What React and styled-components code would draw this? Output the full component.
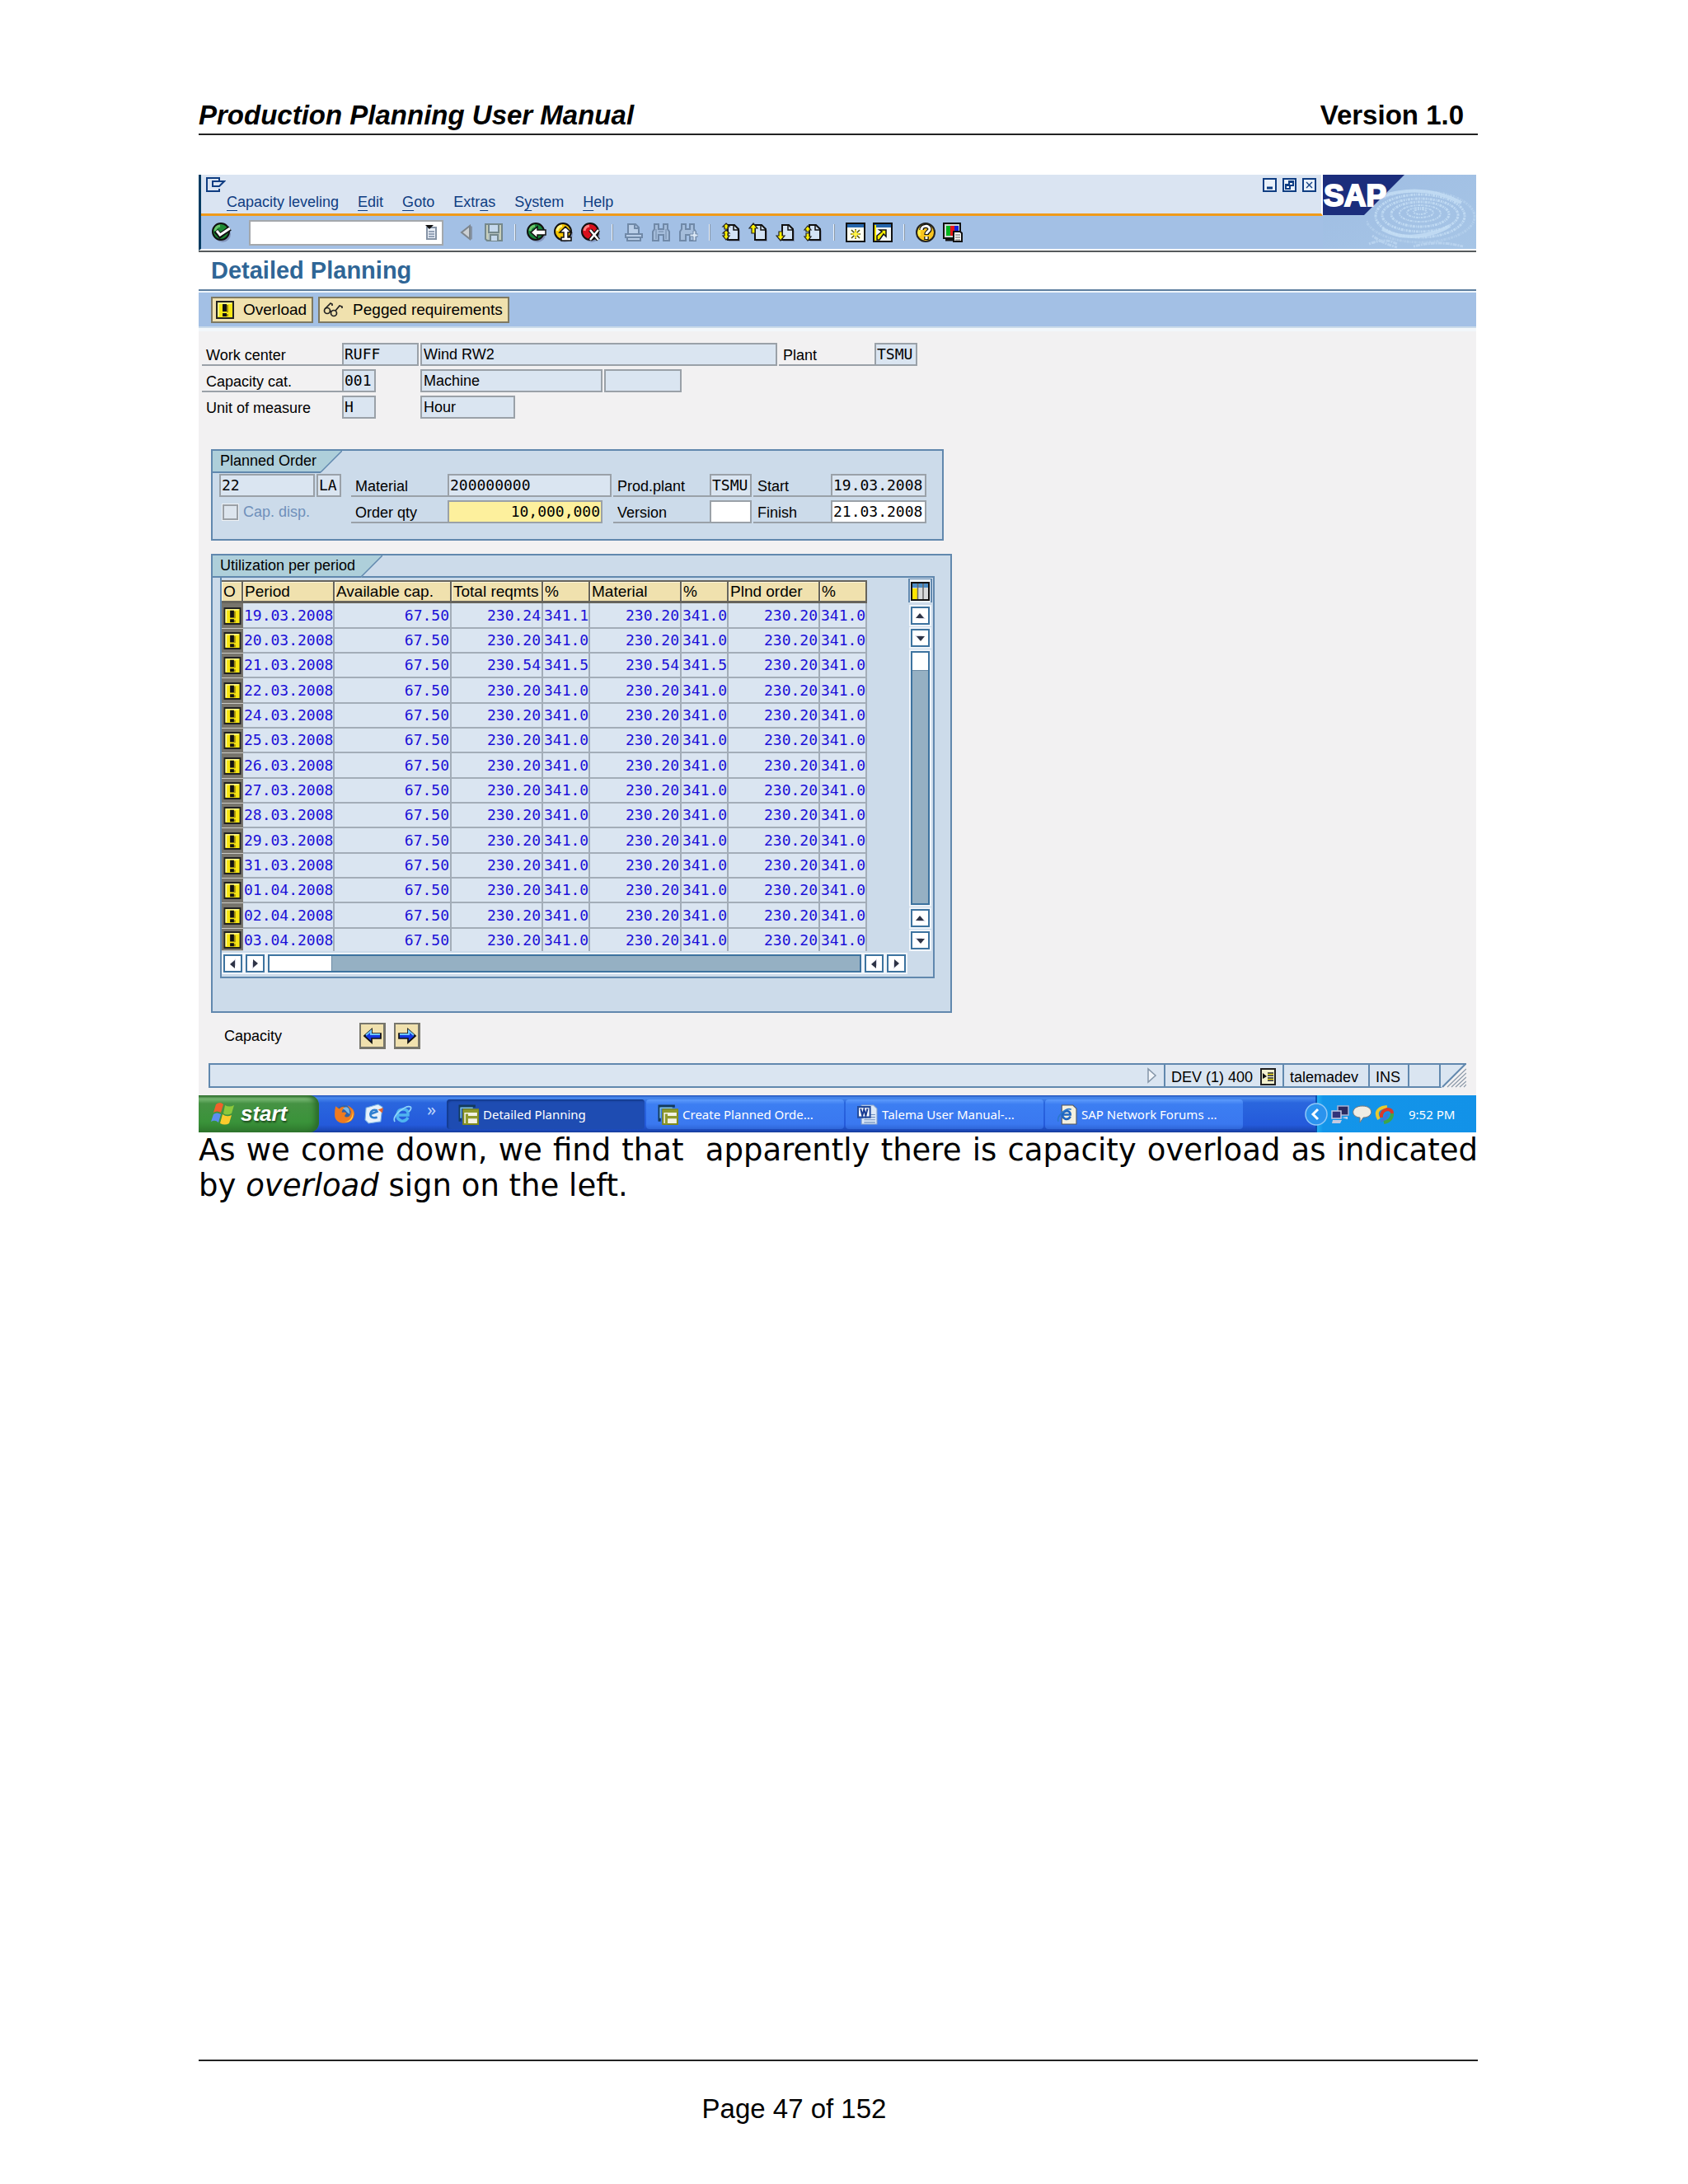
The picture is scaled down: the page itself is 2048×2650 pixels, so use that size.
import React from 'react';
import styled, { createGlobalStyle, css } from 'styled-components';

const colors = {
  pale: '#dae4f2',
  bar: '#a3c0e5',
  body: '#f2f1f2',
  panel: '#ccdbea',
  field: '#dae5f1',
  tab: '#aecfda',
  line: '#6188ae',
  fieldLine: '#9aa1a8',
  sand: '#f0e1ae',
  navy: '#0f3d82',
  yellow: '#fff200',
};

const sans = "'Liberation Sans', Arial, sans-serif";
const mono = "'DejaVu Sans Mono', 'Liberation Mono', monospace";

const GlobalStyle = createGlobalStyle`
  * {
    box-sizing: border-box;
  }
  body {
    margin: 0;
    background: #fff;
    color: #000;
    font-family: ${sans};
  }
  button, input {
    margin: 0;
    padding: 0;
    font: inherit;
    color: inherit;
    border-radius: 0;
  }
  svg {
    display: block;
    flex: none;
  }
`;

/* ---------- document page ---------- */

const Page = styled.div`
  display: flex;
  flex-direction: column;
  min-height: 100vh;
  padding: 121px 255px 72px 241px;
`;

const PageHeader = styled.header`
  display: flex;
  justify-content: space-between;
  padding: 0 17px 3px 0;
  border-bottom: 2px solid #222;
  margin-bottom: 48px;
  font-size: 33px;
  line-height: 38px;
  font-weight: bold;
`;

const Paragraph = styled.p`
  margin: 0;
  font-family: 'DejaVu Sans', Verdana, sans-serif;
  font-size: 37px;
  line-height: 43px;
  text-align: justify;
`;

const PageFooter = styled.footer`
  margin-top: auto;
  padding: 39px 107px 0 0;
  border-top: 2px solid #222;
  font-size: 33px;
  line-height: 38px;
  text-align: center;
`;

/* ---------- SAP window ---------- */

const Screen = styled.main`
  margin-right: 2px;
  background: ${colors.body};
  font-size: 18px;
  line-height: 20px;
`;

const TopArea = styled.div`
  display: flex;
  border-left: 3px solid #063c62;
  border-bottom: 2px solid #fff;
`;

const TopBars = styled.div`
  flex: 1;
`;

const MenuBar = styled.div`
  display: flex;
  flex-direction: column;
  height: 50px;
  padding: 1px 6px 0 6px;
  background: ${colors.pale};
  border-bottom: 3px solid #f09a1a;
  border-right: 2px solid #fff;
`;

const TitleStrip = styled.div`
  display: flex;
  align-items: center;
  height: 22px;
`;

const WindowButtons = styled.div`
  display: flex;
  gap: 7px;
  margin-left: auto;
`;

const WindowButton = styled.button`
  width: 17px;
  height: 17px;
  border: 2px solid ${colors.navy};
  background: #eaf1fa;
`;

const Menu = styled.nav`
  display: flex;
  gap: 23px;
  padding-left: 25px;
  color: ${colors.navy};
`;

const MenuItem = styled.a`
  color: inherit;
  text-decoration: none;
  u {
    text-underline-offset: 4px;
    text-decoration-thickness: 1px;
  }
`;

const Toolbar = styled.div`
  display: flex;
  align-items: center;
  gap: 9px;
  height: 40px;
  padding-left: 13px;
  background: ${colors.bar};
`;

const ToolButton = styled.button`
  width: 24px;
  height: 24px;
  border: 0;
  background: none;
`;

const ToolSeparator = styled.span`
  width: 2px;
  height: 20px;
  margin: 0 4px;
  background: #e9f1fa;
  border-right: 1px solid #8a98a8;
`;

const CommandBox = styled.label`
  display: flex;
  align-items: center;
  width: 236px;
  height: 31px;
  margin: 0 7px 0 12px;
  padding-right: 5px;
  background: #fff;
  border: 2px solid #a4a8ac;
`;

const CommandInput = styled.input`
  flex: 1;
  min-width: 0;
  border: 0;
  background: none;
  outline: 0;
`;

const TitleBar = styled.h1`
  margin: 0;
  padding: 6px 15px 0;
  height: 49px;
  border-top: 2px solid #555a5c;
  border-bottom: 2px solid #5f7f9f;
  background: #fff;
  color: #2f6696;
  font-size: 29px;
  line-height: 32px;
`;

const ActionBar = styled.div`
  display: flex;
  align-items: center;
  gap: 6px;
  height: 49px;
  padding: 0 15px 2px;
  background: ${colors.bar};
  border-top: 2px solid #eef5fb;
  border-bottom: 4px solid #f2f7fb;
  box-shadow: inset 0 -2px #c9dae9;
`;

const ActionButton = styled.button`
  display: flex;
  align-items: center;
  gap: 11px;
  height: 32px;
  padding: 0 6px 0 4px;
  border: 2px solid #7e7962;
  background: ${colors.sand};
  font-size: 19px;
`;

const Content = styled.div`
  padding: 14px 12px 9px 4px;
`;

/* ---------- form parts ---------- */

const Row = styled.div`
  display: flex;
  height: 28px;
  margin-bottom: 4px;
`;

const Label = styled.label`
  flex: none;
  width: ${({ $w }) => $w}px;
  padding: 5px 0 0 5px;
  border-bottom: 2px solid ${({ $plain }) => ($plain ? 'transparent' : colors.fieldLine)};
  white-space: nowrap;
`;

const tones = {
  locked: colors.field,
  open: '#fff',
  required: '#fdf09d',
};

const Field = styled.input`
  flex: none;
  width: ${({ $w }) => $w}px;
  height: 28px;
  padding: 0 2px;
  border: 2px solid ${colors.fieldLine};
  background: ${({ $tone }) => tones[$tone || 'locked']};
  margin-right: ${({ $after }) => $after || 0}px;
  outline: 0;
  ${({ $mono }) => $mono && css`
    padding: 0 1px 2px;
    font-family: ${mono};
  `}
  ${({ $right }) => $right && css`
    text-align: right;
  `}
`;

const Panel = styled.section`
  width: ${({ $w }) => $w}px;
  margin: ${({ $top }) => $top}px 0 0 11px;
  padding-bottom: ${({ $bottom }) => $bottom}px;
  border: 2px solid ${colors.line};
  background: ${colors.panel};
`;

const PanelHead = styled.div`
  display: flex;
  height: 27px;
`;

const PanelTitle = styled.h2`
  margin: 0;
  padding: 2px 14px 0 9px;
  width: ${({ $w }) => $w}px;
  background: ${colors.tab};
  border-bottom: 2px solid ${colors.line};
  font-size: 18px;
  font-weight: normal;
  line-height: 20px;
  white-space: nowrap;
`;

const OrderGrid = styled.div`
  display: grid;
  grid-template-columns: 160px 117px 201px 117px 53px 94px 116px;
  row-gap: 4px;
  padding: 1px 0 0 8px;
`;

const Cell = styled.div`
  display: flex;
`;

const CheckLabel = styled.label`
  display: flex;
  align-items: center;
  gap: 6px;
  padding-left: 4px;
  color: #6f90ba;
`;

const CheckBox = styled.input`
  appearance: none;
  width: 19px;
  height: 19px;
  border: 2px solid #9ba0a6;
  background: #dde5ee;
  box-shadow: 0 0 0 1px #eef2f6;
`;

/* ---------- utilization table ---------- */

const TableFrame = styled.div`
  width: 867px;
  margin: -2px 0 0 9px;
  padding: 1px 0 5px;
  border: 2px solid ${colors.line};
`;

const TableArea = styled.div`
  display: flex;
  justify-content: space-between;
`;

const Table = styled.table`
  width: 783px;
  margin-top: 2px;
  table-layout: fixed;
  border-collapse: separate;
  border-spacing: 0;
`;

const HeadCell = styled.th`
  height: 28px;
  padding: 0 0 0 2px;
  background: ${colors.sand};
  border: solid #66645c;
  border-width: 2px 2px 3px 0;
  box-shadow: inset 1px 1px #fbf5dc;
  font-size: 19px;
  font-weight: normal;
  text-align: left;
  white-space: nowrap;
`;

const BodyRow = styled.tr`
  height: 30px;
  &:nth-child(3n + 1) {
    height: 31px;
  }
  &:last-child {
    height: 27px;
  }
`;

const DataCell = styled.td`
  padding: 0 1px;
  background: ${colors.field};
  border-right: 2px solid #a3adb8;
  border-bottom: 2px solid #a3adb8;
  color: #1a0fd8;
  font-family: ${mono};
  line-height: 24px;
  text-align: ${({ $left }) => ($left ? 'left' : 'right')};
  ${BodyRow}:last-child & {
    border-bottom: 0;
  }
`;

const FlagCell = styled.td`
  padding: 0 1px 0 2px;
  background: #77746c;
  border-bottom: 1px solid #c9c9c4;
`;

const VerticalScroll = styled.div`
  display: flex;
  flex-direction: column;
  align-items: center;
  gap: 5px;
  padding: 0 1px 2px 0;
`;

const HorizontalScroll = styled.div`
  display: flex;
  gap: 4px;
  margin-top: 4px;
  padding: 0 33px 0 2px;
`;

const ScrollButton = styled.button`
  display: flex;
  align-items: center;
  justify-content: center;
  width: 23px;
  height: 22px;
  border: 2px solid #3d739f;
  background: #fff;
  box-shadow: 0 0 0 2px #f0f5fa;
`;

const Track = styled.div`
  flex: 1;
  display: flex;
  flex-direction: ${({ $vertical }) => ($vertical ? 'column' : 'row')};
  ${({ $vertical }) => ($vertical ? 'width: 23px;' : 'height: 22px;')}
  border: 2px solid #3d739f;
  background: #95b0c3;
  box-shadow: 0 0 0 2px #f0f5fa;
`;

const Thumb = styled.div`
  ${({ $vertical }) => ($vertical ? 'height: 22px;' : 'width: 76px;')}
  background: #fff;
  border: solid #6d8ca5;
  border-width: ${({ $vertical }) => ($vertical ? '0 0 1px' : '0 1px 0 0')};
`;

const ConfigButton = styled.button`
  display: flex;
  align-items: center;
  justify-content: center;
  width: 29px;
  height: 29px;
  border: solid ${colors.line};
  border-width: 1px 2px 0;
  background: #eef4fa;
`;

const CapacityRow = styled.div`
  display: flex;
  align-items: center;
  gap: 10px;
  margin: 12px 0 17px 27px;
`;

const CapacityLabel = styled.span`
  width: 154px;
`;

const StepButton = styled.button`
  display: flex;
  align-items: center;
  justify-content: center;
  width: 32px;
  height: 32px;
  border: solid #77766c;
  border-width: 2px 3px 3px 2px;
  background: ${colors.sand};
`;

const StatusBar = styled.div`
  display: flex;
  height: 30px;
  margin-left: 8px;
  border: 2px solid ${colors.line};
  border-right: 0;
  background: ${colors.field};
`;

const StatusCell = styled.div`
  display: flex;
  align-items: center;
  gap: 9px;
  width: ${({ $w }) => $w}px;
  padding: 3px 0 0 7px;
  border-left: 2px solid ${colors.line};
`;

const StatusMessage = styled.div`
  flex: 1;
  display: flex;
  align-items: center;
  justify-content: flex-end;
  padding-right: 8px;
`;

const GripBox = styled.div`
  margin: -2px 0;
  border-left: 2px solid ${colors.line};
`;

/* ---------- Windows taskbar ---------- */

const Taskbar = styled.div`
  display: flex;
  height: 45px;
  background: linear-gradient(#1f4fb8 0, #4b8bee 3px, #2a66de 9px, #245adb 36px, #1b47b4 43px, #153a94);
  color: #fff;
  font-family: 'Noto Sans', Tahoma, sans-serif;
  font-size: 15px;
`;

const StartButton = styled.button`
  display: flex;
  align-items: center;
  gap: 7px;
  width: 146px;
  padding: 0 0 2px 15px;
  border: 0;
  border-radius: 0 12px 12px 0;
  background: linear-gradient(#2d6f2c 0, #7cbb78 4px, #459243 10px, #3a933a 32px, #2f7a2e);
  box-shadow: inset -5px 0 6px #2c6c2b;
  font-family: ${sans};
  font-size: 26px;
  font-weight: bold;
  font-style: italic;
  text-shadow: 1px 2px 2px #1d4a1d;
`;

const QuickLaunch = styled.div`
  display: flex;
  align-items: center;
  gap: 10px;
  width: 155px;
  padding-left: 18px;
`;

const Chevrons = styled.span`
  margin-left: 8px;
  padding-bottom: 14px;
  color: #bcd3fa;
  font-size: 22px;
`;

const TaskButton = styled.button`
  display: flex;
  align-items: center;
  gap: 5px;
  width: 240px;
  height: 36px;
  margin: 5px 2px 0 0;
  padding-left: 14px;
  border: 0;
  border-radius: 4px;
  background: ${({ $active }) => ($active ? '#1e4cb2' : 'linear-gradient(#5d9bfb, #3c7ef2 6px, #3a78f0 30px, #2f66d8)')};
  box-shadow: ${({ $active }) => ($active ? 'inset 2px 2px 2px #143a8e' : 'none')};
  white-space: nowrap;
`;

const Tray = styled.div`
  display: flex;
  align-items: center;
  gap: 3px;
  width: 208px;
  margin-left: auto;
  background: linear-gradient(90deg, transparent 13px, #0b4fae 13px, #0b4fae 15px, #22b0f2 15px, #1395ea 22px, #1292e8);
`;

const Clock = styled.time`
  margin-left: 14px;
`;

/* ---------- icons ---------- */

const Icon = ({ w = 24, h = 24, box = '0 0 24 24', children }) => (
  <svg width={w} height={h} viewBox={box} aria-hidden="true">
    {children}
  </svg>
);

const Ball = ({ fill, shine, children }) => (
  <Icon>
    <circle cx="13" cy="14" r="10" fill="#8396bd" />
    <circle cx="11" cy="11" r="10" fill={fill} stroke="#111" strokeWidth="2" />
    <path d="M4 10a7 7 0 0 1 6-6" fill="none" stroke={shine} strokeWidth="3" />
    {children}
  </Icon>
);

const icons = {
  check: (
    <Ball fill="#1f8a34" shine="#6cc66c">
      <path d="M5 10l5 6 12-9" fill="none" stroke="#111" strokeWidth="6" />
      <path d="M6 10l4 5 12-8" fill="none" stroke="#fff" strokeWidth="3" />
    </Ball>
  ),
  prev: (
    <Icon>
      <path d="M17 4v17l2-1V5z" fill="#8795a8" />
      <path d="M16 4v16L6 12z" fill="#ccd0d4" stroke="#7d858d" strokeWidth="2" />
    </Icon>
  ),
  save: (
    <Icon>
      <path d="M2 2h20v20H4l-2-2z" fill="#b5c3c0" stroke="#75888c" strokeWidth="2" />
      <path d="M6 2h12v10H6zM8 22v-7h9v7" fill="#c5d8ec" stroke="#75888c" strokeWidth="2" />
      <path d="M4 3v17M20 3v18" stroke="#d9d9b5" strokeWidth="1" />
    </Icon>
  ),
  back: (
    <Ball fill="#17863a" shine="#6cc66c">
      <path d="M5 12l8-7v4h10v6H13v4z" fill="#fff" stroke="#111" strokeWidth="1.5" />
    </Ball>
  ),
  up: (
    <Ball fill="#f7c600" shine="#fff58a">
      <path d="M14 5l7 7h-4v6h4v4H9v-4h3v-6H7z" fill="#fff" stroke="#111" strokeWidth="1.5" />
    </Ball>
  ),
  cancel: (
    <Ball fill="#d8101c" shine="#ff8080">
      <path d="M11 9l10 12M21 9L11 21" stroke="#111" strokeWidth="5" />
      <path d="M11 9l10 12M21 9L11 21" stroke="#fff" strokeWidth="2.5" />
    </Ball>
  ),
  print: (
    <Icon>
      <path d="M5 14V2h9l4 4v8" fill="#b9cee8" stroke="#7089a8" strokeWidth="2" />
      <path d="M13 2v5h5" fill="none" stroke="#7089a8" strokeWidth="2" />
      <path d="M2 14h20v4H2zM4 18h16v4H4z" fill="#b9cee8" stroke="#7089a8" strokeWidth="2" />
    </Icon>
  ),
  find: (
    <Icon>
      <path d="M4 2h5v6h6V2h5v6l2 3v11h-7v-7H9v7H2V11l2-3z" fill="#a5bddb" stroke="#7089a8" strokeWidth="2" />
      <path d="M9 11h6M6 8v12M18 8v12" stroke="#7089a8" strokeWidth="1" />
    </Icon>
  ),
  findNext: (
    <Icon>
      <path d="M4 2h5v6h5V2h5v6l2 3v11h-7v-7H9v7H2V11l2-3z" fill="#a5bddb" stroke="#7089a8" strokeWidth="2" />
      <path d="M14 14h4v-4h3v4h3v3h-3v5h-3v-5h-4z" fill="#dbe8f6" stroke="#7089a8" strokeWidth="1" />
    </Icon>
  ),
  newSession: (
    <Icon>
      <path d="M1 1h22v22H1z" fill="#fffff0" stroke="#111" strokeWidth="2" />
      <path d="M2 2h20v4H2z" fill="#2666ad" />
      <path d="M12 8v12M6 14h12M7 9l10 10M17 9L7 19" stroke="#4a4a10" strokeWidth="1.5" />
      <path d="M12 9v10M7 14h10" stroke="#ffe600" strokeWidth="1.5" />
      <circle cx="12" cy="14" r="2.5" fill="#fff34a" />
    </Icon>
  ),
  shortcut: (
    <Icon>
      <path d="M1 1h22v22H1z" fill="#f4f6f4" stroke="#111" strokeWidth="2" />
      <path d="M2 2h20v4H2z" fill="#2666ad" />
      <path d="M3 3v19" stroke="#ffe600" strokeWidth="2" />
      <path d="M5 21v-5l6-5-3-2h8v8l-3-3-5 7z" fill={colors.yellow} stroke="#111" strokeWidth="1.5" />
    </Icon>
  ),
  help: (
    <Icon>
      <circle cx="12" cy="12" r="11" fill="#f9c51f" stroke="#222" strokeWidth="2" />
      <path d="M5 16A9 9 0 0 1 9 4" fill="none" stroke="#fff24a" strokeWidth="3" />
      <path d="M7 9c0-6 10-6 10-1 0 3-4 3-4 7M13 17v4" fill="none" stroke="#111" strokeWidth="5.5" />
      <path d="M7 9c0-6 10-6 10-1 0 3-4 3-4 6M13 17v3" fill="none" stroke="#fff" strokeWidth="3" />
    </Icon>
  ),
  layout: (
    <Icon>
      <path d="M1 1h20v18H1z" fill="#cfd6d6" stroke="#111" strokeWidth="2" />
      <path d="M4 4h5v12H4z" fill="#00b41e" />
      <path d="M9 4h5v12H9z" fill="#e8121a" />
      <path d="M14 4h5v12h-5z" fill="#1420dc" />
      <path d="M3 21h12" stroke="#111" strokeWidth="3" />
      <path d="M13 11h8l2 2v10H13z" fill="#fff" stroke="#111" strokeWidth="2" />
      <path d="M15 15h6M15 18h6M15 21h6" stroke="#555" strokeWidth="1" />
    </Icon>
  ),
};

const pageArrows = {
  first: ['M6 1l4 4H8v3H4V5H2z', 'M6 9l4 4H8v3h2l-4 5-4-5h2v-3H2z'],
  previous: ['M6 1l5 6H8v6H4V7H1z'],
  next: ['M4 11h4v5h3l-5 6-5-6h3z'],
  last: ['M6 4l4 5H8v2H4V9H2z', 'M4 13h4v4h2l-4 5-4-5h2z'],
};

const PageIcon = ({ kind }) => (
  <Icon>
    <path d="M9 5h10l4 5v13H9z" fill="#8497bb" />
    <path d="M8 3h8l5 5v13H8z" fill="#d3e3f5" stroke="#111" strokeWidth="2" />
    <path d="M15 3v6h6" fill="none" stroke="#111" strokeWidth="1.5" />
    {pageArrows[kind].map((d) => (
      <path key={d} d={d} fill={colors.yellow} stroke="#222" strokeWidth="1.2" />
    ))}
  </Icon>
);

const ExitIcon = () => (
  <Icon w={24} h={18} box="0 0 24 18">
    <path d="M16 5V1H1v16h15v-3M8 5h14l-6 6H8z" fill="none" stroke={colors.navy} strokeWidth="2" />
  </Icon>
);

const HistoryIcon = () => (
  <Icon w={16} h={20} box="0 0 16 20">
    <path d="M3 4h11v14H3z" fill="#eaf0f8" stroke="#8593a5" strokeWidth="2" />
    <path d="M1 1h10L6 6z" fill="#111" />
    <path d="M5 9h7M5 12h7M5 15h7" stroke="#7888a0" strokeWidth="1.5" />
  </Icon>
);

const Overload = ({ h = 22 }) => (
  <Icon w={22} h={h} box="0 0 22 22">
    <path d="M1 1h20v20H1z" fill="#f7e614" stroke="#222" strokeWidth="2" />
    <path d="M3 19V3h16" fill="none" stroke="#fffbb0" strokeWidth="1.5" />
    <path d="M14 5v9M14 16v3" stroke="#a08c10" strokeWidth="2" />
    <path d="M8 4h5v9H8zM8 15h5v4H8z" fill="#111" />
  </Icon>
);

const Glasses = () => (
  <Icon w={25} h={22} box="0 0 25 22">
    <g fill="none" stroke="#222" strokeWidth="1.7">
      <circle cx="5" cy="12" r="3.5" />
      <circle cx="13" cy="15" r="3.5" />
      <path d="M2 10L9 3l2 1v2M8 12l2 1M15 12l5-6 3 1v2" />
    </g>
  </Icon>
);

const WindowGlyph = ({ kind }) => (
  <Icon w={13} h={13} box="0 0 13 13">
    {kind === 'minimize' && <path d="M3 10h7" stroke={colors.navy} strokeWidth="3" />}
    {kind === 'restore' && (
      <g fill={colors.navy}>
        <path d="M5 1h7v7H5z" />
        <path d="M1 5h7v7H1z" />
        <path d="M7 4h3v2H7zM3 8h3v2H3z" fill="#fff" />
      </g>
    )}
    {kind === 'close' && <path d="M3 3l7 7M10 3l-7 7" stroke={colors.navy} strokeWidth="1.3" />}
  </Icon>
);

const ripples = [
  [8, 3], [16, 6], [25, 10], [35, 15], [46, 20], [54, 26], [66, 31],
];

const SapLogo = () => (
  <svg width="186" height="90" viewBox="0 0 186 90" role="img" aria-label="SAP">
    <defs>
      <linearGradient id="water" x1="0" x2="1" y1="0" y2="1">
        <stop offset="0" stopColor="#9fbde3" />
        <stop offset="1" stopColor="#a6c5e6" />
      </linearGradient>
      <clipPath id="waterClip">
        <path d="M99 0h87v90H48l6-40z" />
      </clipPath>
    </defs>
    <rect width="186" height="90" fill="url(#water)" />
    <g clipPath="url(#waterClip)" fill="none" stroke="#c6def5">
      {ripples.map(([rx, ry], i) => (
        <ellipse
          key={rx}
          cx="118"
          cy={45 + i}
          rx={rx}
          ry={ry}
          strokeWidth={i > 2 ? 3 : 2}
          strokeDasharray="1 1 3 1 2 1"
          opacity={i > 5 ? 0.4 : 0.8}
        />
      ))}
      <path d="M72 66q28 16 66 3M92 74q36 4 62-12M72 26q50-16 96 8" strokeWidth="4" opacity="0.8" />
      <path d="M56 84q20-8 34 0M60 74q14 10 30 14M110 87q30-8 60 0" strokeWidth="3" opacity="0.6" strokeDasharray="2 1 5 1" />
    </g>
    <path d="M0 0h99L50 49H0z" fill="#1b2d7c" />
    <text
      x="1"
      y="38"
      fill="#fff"
      stroke="#fff"
      strokeWidth="2"
      fontFamily="'Liberation Sans', Arial, sans-serif"
      fontWeight="bold"
      fontSize="37"
    >
      SAP
    </text>
  </svg>
);

const Slope = () => (
  <svg width="26" height="27" viewBox="0 0 26 27" aria-hidden="true">
    <path d="M0 0h26L0 27z" fill={colors.tab} />
    <path d="M26 0L0 26" stroke={colors.line} strokeWidth="1.5" />
  </svg>
);

const turns = { up: 0, right: 90, down: 180, left: 270 };

const Arrow = ({ to }) => (
  <Icon w={15} h={15} box="0 0 15 15">
    <g transform={`rotate(${turns[to]} 7.5 7.5)`}>
      <path d="M8 5l6 6H5z" fill="#d4d6e4" />
      <path d="M7 4l5 6H2z" fill="#2e3345" />
    </g>
  </Icon>
);

const BlueArrow = ({ flip }) => (
  <Icon w={24} h={20} box="0 0 24 20">
    <g transform={flip ? 'translate(24 0) scale(-1 1)' : undefined}>
      <path d="M2 10l9-8v5h11v6H11v5z" fill="#1438e0" stroke="#111" strokeWidth="1.7" />
      <path d="M4 9l6-5v4h11" fill="none" stroke="#6fc8ff" strokeWidth="2" />
    </g>
  </Icon>
);

const ConfigIcon = () => (
  <Icon w={23} h={23} box="0 0 23 23">
    <path d="M1 1h21v21H1z" fill="#d8dada" stroke="#111" strokeWidth="2" />
    <path d="M2 2h19v5H2z" fill="#4c8cc4" />
    <path d="M2 8h6v13H2z" fill="#ffe500" />
    <path d="M8.5 2v19M15 2v19" stroke="#666" strokeWidth="1.5" />
  </Icon>
);

const StatusIcon = () => (
  <Icon w={19} h={21} box="0 0 19 21">
    <path d="M1 1h17v19H1z" fill="#f3f1cf" stroke="#222" strokeWidth="2" />
    <path d="M3 6v7l5-3z" fill="#111" />
    <path d="M9 6h7M9 9h7M9 12h7M9 15h7" stroke="#222" strokeWidth="1.5" />
    <path d="M9 7.5h7M9 13.5h7" stroke="#ffe600" strokeWidth="1.2" />
  </Icon>
);

const Grip = () => (
  <svg width="31" height="30" viewBox="0 0 31 30" aria-hidden="true">
    <path d="M1 0h30v30H1z" fill={colors.body} />
    <path d="M0 0h30L2 29H0z" fill={colors.field} />
    <path d="M0 1h31M2 29L30 1" stroke={colors.line} strokeWidth="2" />
    <path d="M8 29L31 7M13 29l18-17M18 29l13-12M23 29l8-7M28 29l3-3" stroke="#8a98a8" strokeWidth="1.2" />
  </svg>
);

const WindowsFlag = () => (
  <Icon w={29} h={28} box="0 0 29 28">
    <path d="M6 3q5-4 9 0l-3 10q-5-3-9 0z" fill="#f0602b" />
    <path d="M17 4q5 3 11 0l-3 10q-6 3-10 0z" fill="#8cc83c" />
    <path d="M3 15q4-3 9 0L9 25q-4-4-9-1z" fill="#5c8ff0" />
    <path d="M14 15q5 4 11 1l-3 10q-5 3-11 0z" fill="#fbcb2c" />
  </Icon>
);

const Firefox = () => (
  <Icon w={26} h={26}>
    <circle cx="12" cy="12" r="10" fill="#2e62a8" />
    <path d="M2 3l4 3q4-4 7-1-4 1-4 5 4-1 5 1-3 3-1 4 6 1 6-6-1-4-4-7 8 3 8 10-1 9-11 10Q1 22 1 12q0-5 1-9z" fill="#ee7a1f" />
    <path d="M21 7q3 14-9 14 10-2 9-14z" fill="#fbd24a" />
    <path d="M10 6q4-4 7 0l1 6-3-2q-2-3-5-4z" fill="#79b8e8" />
  </Icon>
);

const Outlook = () => (
  <Icon w={25} h={25}>
    <path d="M3 5l14-4 5 3-2 17-14 2-4-4z" fill="#e6f1fb" stroke="#7fb4e4" strokeWidth="1" />
    <path d="M16 8q-7-2-8 4 0 6 8 4M9 12l8-3" fill="none" stroke="#2f7fd0" strokeWidth="2.5" />
    <path d="M17 7l6-2-1 6z" fill="#e5632c" />
  </Icon>
);

const InternetExplorer = () => (
  <Icon>
    <path d="M19 16q-3 5-8 4-6-2-5-8 1-6 7-6 7 0 6 7H7" fill="none" stroke="#4fb4f0" strokeWidth="3.5" />
    <path d="M3 21Q0 16 9 8q9-7 13-5 2 2-2 6" fill="none" stroke="#8fd4fa" strokeWidth="1.7" />
  </Icon>
);

const SapTaskIcon = () => (
  <Icon w={25} h={25}>
    <path d="M2 20V2h18" fill="none" stroke="#123a5c" strokeWidth="3" />
    <path d="M3 16V4h14" fill="none" stroke="#7fc0e0" strokeWidth="1.5" />
    <path d="M6 6h17v17H6z" fill="#f2f2e4" stroke="#7f8a1c" strokeWidth="2" />
    <path d="M6 8h17M10 11v12M11 15h12" stroke="#8f9a2c" strokeWidth="3" />
  </Icon>
);

const WordIcon = () => (
  <Icon w={25} h={25}>
    <path d="M5 1h14l4 4v18H5z" fill="#dbe8f8" stroke="#8ba5cc" strokeWidth="1" />
    <path d="M14 12h7M14 15h7M8 18h13M8 21h13" stroke="#6f8fc0" strokeWidth="1" />
    <path d="M1 3h14v12H1z" fill="#fff" stroke="#244c9c" strokeWidth="2" />
    <path d="M4 5l2 8 2-7 2 7 2-8" fill="none" stroke="#1c3f94" strokeWidth="2" />
  </Icon>
);

const ForumIcon = () => (
  <Icon w={25} h={25}>
    <path d="M6 1h13l4 4v18H6z" fill="#f3f0e0" stroke="#555" strokeWidth="1" />
    <path d="M16 14q-2 4-6 3-4-2-3-6 2-4 6-3 3 1 3 4H7" fill="none" stroke="#1f66c0" strokeWidth="2.5" />
    <path d="M2 20Q0 15 7 9q6-5 10-3" fill="none" stroke="#2a78cc" strokeWidth="1.5" />
  </Icon>
);

const TrayArrow = () => (
  <Icon w={28} h={28} box="0 0 28 28">
    <circle cx="14" cy="14" r="13" fill="#2b93ee" stroke="#8fc8f8" strokeWidth="1.5" />
    <path d="M16 8l-6 6 6 6" fill="none" stroke="#fff" strokeWidth="3" />
  </Icon>
);

const NetworkIcon = () => (
  <Icon w={24} h={24}>
    <path d="M9 2h13v11H9z" fill="#2a2a60" stroke="#a9b2d4" strokeWidth="1.5" />
    <path d="M14 16l7-1v3z" fill="#d3d6e6" />
    <path d="M2 8h11v9H2z" fill="#33337a" stroke="#c0c8e2" strokeWidth="1.5" />
    <path d="M3 19h11l-2 4H2z" fill="#c7cbe0" />
  </Icon>
);

const Balloon = () => (
  <Icon w={24} h={24}>
    <path d="M12 2c14 0 14 14 1 14l-4 6v-6C-3 15-2 2 12 2z" fill="#eeede4" stroke="#777" strokeWidth="1" />
  </Icon>
);

const SwirlIcon = () => (
  <Icon w={24} h={24}>
    <g fill="none" strokeWidth="4">
      <path d="M5 18Q-1 8 9 4l6-1" stroke="#e8c92c" />
      <path d="M8 16q-1-8 7-10 6 0 6 5" stroke="#d83a2a" />
      <path d="M15 11q-1 7-8 9" stroke="#3c78d8" />
      <path d="M21 11q0 9-10 11" stroke="#3fa548" />
    </g>
  </Icon>
);

/* ---------- data ---------- */

const menuItems = [
  ['', 'C', 'apacity leveling'],
  ['', 'E', 'dit'],
  ['', 'G', 'oto'],
  ['Extr', 'a', 's'],
  ['S', 'y', 'stem'],
  ['', 'H', 'elp'],
];

const tools = [
  'prev', 'save', '|', 'back', 'up', 'cancel', '|', 'print', 'find', 'findNext', '|',
  'page-first', 'page-previous', 'page-next', 'page-last', '|', 'newSession', 'shortcut', '|', 'help', 'layout',
];

const columns = [
  ['O', 26], ['Period', 111], ['Available cap.', 142], ['Total reqmts', 111], ['%', 57],
  ['Material', 111], ['%', 57], ['Plnd order', 111], ['%', 57],
];

const usual = ['67.50', '230.20', '341.0', '230.20', '341.0', '230.20', '341.0'];

const periods = [
  ['19.03.2008', '67.50', '230.24', '341.1', '230.20', '341.0', '230.20', '341.0'],
  ['20.03.2008', ...usual],
  ['21.03.2008', '67.50', '230.54', '341.5', '230.54', '341.5', '230.20', '341.0'],
  ['22.03.2008', ...usual],
  ['24.03.2008', ...usual],
  ['25.03.2008', ...usual],
  ['26.03.2008', ...usual],
  ['27.03.2008', ...usual],
  ['28.03.2008', ...usual],
  ['29.03.2008', ...usual],
  ['31.03.2008', ...usual],
  ['01.04.2008', ...usual],
  ['02.04.2008', ...usual],
  ['03.04.2008', ...usual],
];

const tasks = [
  ['Detailed Planning', SapTaskIcon],
  ['Create Planned Orde...', SapTaskIcon],
  ['Talema User Manual-...', WordIcon],
  ['SAP Network Forums ...', ForumIcon],
];

/* ---------- sections ---------- */

const Header = () => (
  <TopArea>
    <TopBars>
      <MenuBar>
        <TitleStrip>
          <ExitIcon />
          <WindowButtons>
            {['minimize', 'restore', 'close'].map((kind) => (
              <WindowButton key={kind} type="button" aria-label={kind}>
                <WindowGlyph kind={kind} />
              </WindowButton>
            ))}
          </WindowButtons>
        </TitleStrip>
        <Menu>
          {menuItems.map(([before, key, after]) => (
            <MenuItem href="#" key={before + key + after}>
              {before}
              <u>{key}</u>
              {after}
            </MenuItem>
          ))}
        </Menu>
      </MenuBar>
      <Toolbar>
        <ToolButton type="button" aria-label="Enter">{icons.check}</ToolButton>
        <CommandBox>
          <CommandInput aria-label="Command" />
          <HistoryIcon />
        </CommandBox>
        {tools.map((tool, i) => {
          if (tool === '|') return <ToolSeparator key={i} />;
          return (
            <ToolButton key={i} type="button" aria-label={tool}>
              {tool.startsWith('page-') ? <PageIcon kind={tool.slice(5)} /> : icons[tool]}
            </ToolButton>
          );
        })}
      </Toolbar>
    </TopBars>
    <SapLogo />
  </TopArea>
);

const WorkCenterForm = () => (
  <>
    <Row>
      <Label htmlFor="workCenter" $w={170}>Work center</Label>
      <Field id="workCenter" $w={93} $after={2} $mono readOnly defaultValue="RUFF" />
      <Field aria-label="Work center name" $w={433} $after={2} readOnly defaultValue="Wind RW2" />
      <Label htmlFor="plant" $w={116}>Plant</Label>
      <Field id="plant" $w={52} $mono readOnly defaultValue="TSMU" />
    </Row>
    <Row>
      <Label htmlFor="capacityCat" $w={170}>Capacity cat.</Label>
      <Field id="capacityCat" $w={41} $after={54} $mono readOnly defaultValue="001" />
      <Field aria-label="Capacity category name" $w={221} $after={2} readOnly defaultValue="Machine" />
      <Field aria-label="Capacity" $w={94} readOnly />
    </Row>
    <Row>
      <Label htmlFor="unit" $w={170} $plain>Unit of measure</Label>
      <Field id="unit" $w={41} $after={54} $mono readOnly defaultValue="H" />
      <Field aria-label="Unit name" $w={115} readOnly defaultValue="Hour" />
    </Row>
  </>
);

const PlannedOrder = () => (
  <Panel $w={889} $top={37} $bottom={19}>
    <PanelHead>
      <PanelTitle $w={131}>Planned Order</PanelTitle>
      <Slope />
    </PanelHead>
    <OrderGrid>
      <Cell>
        <Field aria-label="Order" $w={116} $after={2} $mono readOnly defaultValue="22" />
        <Field aria-label="Order type" $w={30} $mono readOnly defaultValue="LA" />
      </Cell>
      <Label htmlFor="material" $w={117}>Material</Label>
      <Field id="material" $w={199} $mono readOnly defaultValue="200000000" />
      <Label htmlFor="prodPlant" $w={117}>Prod.plant</Label>
      <Field id="prodPlant" $w={51} $mono readOnly defaultValue="TSMU" />
      <Label htmlFor="start" $w={94}>Start</Label>
      <Field id="start" $w={116} $mono readOnly defaultValue="19.03.2008" />

      <CheckLabel>
        <CheckBox type="checkbox" disabled />
        Cap. disp.
      </CheckLabel>
      <Label htmlFor="orderQty" $w={117}>Order qty</Label>
      <Field id="orderQty" $w={188} $mono $right $tone="required" defaultValue="10,000,000" />
      <Label htmlFor="version" $w={117}>Version</Label>
      <Field id="version" $w={51} $mono $tone="open" />
      <Label htmlFor="finish" $w={94}>Finish</Label>
      <Field id="finish" $w={116} $mono $tone="open" defaultValue="21.03.2008" />
    </OrderGrid>
  </Panel>
);

const Utilization = () => (
  <Panel $w={899} $top={16} $bottom={40}>
    <PanelHead>
      <PanelTitle $w={180}>Utilization per period</PanelTitle>
      <Slope />
    </PanelHead>
    <TableFrame>
      <TableArea>
        <Table>
          <colgroup>
            {columns.map(([, width], i) => (
              <col key={i} width={width} />
            ))}
          </colgroup>
          <thead>
            <tr>
              {columns.map(([name], i) => (
                <HeadCell key={i}>{name}</HeadCell>
              ))}
            </tr>
          </thead>
          <tbody>
            {periods.map((period) => (
              <BodyRow key={period[0]}>
                <FlagCell>
                  <Overload h={21} />
                </FlagCell>
                {period.map((value, i) => (
                  <DataCell key={i} $left={i === 0 || value.startsWith('34')}>{value}</DataCell>
                ))}
              </BodyRow>
            ))}
          </tbody>
        </Table>
        <VerticalScroll>
          <ConfigButton type="button" aria-label="Table settings"><ConfigIcon /></ConfigButton>
          <ScrollButton type="button" aria-label="Page up"><Arrow to="up" /></ScrollButton>
          <ScrollButton type="button" aria-label="Line down"><Arrow to="down" /></ScrollButton>
          <Track $vertical><Thumb $vertical /></Track>
          <ScrollButton type="button" aria-label="Line up"><Arrow to="up" /></ScrollButton>
          <ScrollButton type="button" aria-label="Page down"><Arrow to="down" /></ScrollButton>
        </VerticalScroll>
      </TableArea>
      <HorizontalScroll>
        <ScrollButton type="button" aria-label="First column"><Arrow to="left" /></ScrollButton>
        <ScrollButton type="button" aria-label="Next column"><Arrow to="right" /></ScrollButton>
        <Track><Thumb /></Track>
        <ScrollButton type="button" aria-label="Previous column"><Arrow to="left" /></ScrollButton>
        <ScrollButton type="button" aria-label="Last column"><Arrow to="right" /></ScrollButton>
      </HorizontalScroll>
    </TableFrame>
  </Panel>
);

const Status = () => (
  <StatusBar>
    <StatusMessage>
      <Icon w={12} h={20} box="0 0 12 20">
        <path d="M1 2v16l9-8z" fill="#f2f6fa" stroke="#8495a8" strokeWidth="1.5" />
      </Icon>
    </StatusMessage>
    <StatusCell $w={144}>
      DEV (1) 400
      <StatusIcon />
    </StatusCell>
    <StatusCell $w={104}>talemadev</StatusCell>
    <StatusCell $w={48}>INS</StatusCell>
    <StatusCell $w={38} />
    <GripBox>
      <Grip />
    </GripBox>
  </StatusBar>
);

const WindowsTaskbar = () => (
  <Taskbar>
    <StartButton type="button">
      <WindowsFlag />
      start
    </StartButton>
    <QuickLaunch>
      <Firefox />
      <Outlook />
      <InternetExplorer />
      <Chevrons>»</Chevrons>
    </QuickLaunch>
    {tasks.map(([name, TaskIcon], i) => (
      <TaskButton key={name} type="button" $active={i === 0}>
        <TaskIcon />
        {name}
      </TaskButton>
    ))}
    <Tray>
      <TrayArrow />
      <NetworkIcon />
      <Balloon />
      <SwirlIcon />
      <Clock>9:52 PM</Clock>
    </Tray>
  </Taskbar>
);

const App = () => {
  return (
    <Page>
      <GlobalStyle />
      <PageHeader>
        <em>Production Planning User Manual</em>
        <span>Version 1.0</span>
      </PageHeader>

      <Screen>
        <Header />
        <TitleBar>Detailed Planning</TitleBar>
        <ActionBar>
          <ActionButton type="button">
            <Overload />
            Overload
          </ActionButton>
          <ActionButton type="button">
            <Glasses />
            Pegged requirements
          </ActionButton>
        </ActionBar>
        <Content>
          <WorkCenterForm />
          <PlannedOrder />
          <Utilization />
          <CapacityRow>
            <CapacityLabel>Capacity</CapacityLabel>
            <StepButton type="button" aria-label="Previous capacity"><BlueArrow /></StepButton>
            <StepButton type="button" aria-label="Next capacity"><BlueArrow flip /></StepButton>
          </CapacityRow>
          <Status />
        </Content>
        <WindowsTaskbar />
      </Screen>

      <Paragraph>
        As we come down, we find that&nbsp; apparently there is capacity overload as indicated{' '}
        by{' '}
        <em>overload</em> sign on the left.
      </Paragraph>

      <PageFooter>Page 47 of 152</PageFooter>
    </Page>
  );
};

export default App;
